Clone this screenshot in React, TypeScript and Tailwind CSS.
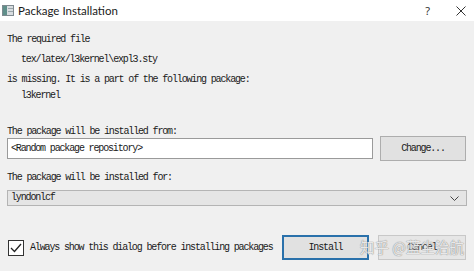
const mono = "font-['Liberation_Mono',monospace] text-[10px] leading-[12px] tracking-[-1.15px] text-[#1a1a1a]";

function TitleIcon() {
  return (
    <svg width="12" height="11" viewBox="0 0 12 11">
      <rect x="0.5" y="0.5" width="11" height="10" fill="#d8dde0" stroke="#7f8a90" />
      <rect x="1" y="1" width="4" height="9" fill="#5f8f8a" />
      <rect x="6" y="3" width="5" height="1" fill="#9aa6ab" />
      <rect x="6" y="6" width="5" height="1" fill="#9aa6ab" />
    </svg>
  );
}

export default function App() {
  return (
    <div className="w-[474px] h-[271px] flex flex-col bg-[#f0f0f0] overflow-hidden">
      {/* Title bar */}
      <div className="h-[21px] bg-white flex items-center pl-[2px] pr-[8px]">
        <TitleIcon />
        <span className="ml-[4px] font-['Lato',sans-serif] text-[11.5px] text-[#1a1a1a] leading-none">
          Package Installation
        </span>
        <span className="ml-auto font-['Noto_Sans',sans-serif] text-[11px] text-[#333] leading-none">?</span>
        <svg className="ml-[26px]" width="10" height="10" viewBox="0 0 10 10">
          <path d="M0.5 0.5 L9.5 9.5 M9.5 0.5 L0.5 9.5" stroke="#333" strokeWidth="1" />
        </svg>
      </div>

      {/* Body */}
      <div className="flex-1 flex flex-col px-[7px] pt-[13px]">
        <div className={mono}>The required file</div>
        <div className={`${mono} mt-[8px] pl-[14px]`}>tex/latex/l3kernel\expl3.sty</div>
        <div className={`${mono} mt-[8px]`}>is missing. It is a part of the following package:</div>
        <div className={`${mono} mt-[4px] pl-[14px]`}>l3kernel</div>

        <div className={`${mono} mt-[24px]`}>The package will be installed from:</div>
        <div className="mt-[-2px] flex items-center gap-[7px]">
          <div className="w-[366px] h-[21px] bg-white border border-[#9a9a9a] flex items-center px-[3px]">
            <span className={mono}>&lt;Random package repository&gt;</span>
          </div>
          <button className="w-[86px] h-[25px] bg-[#e1e1e1] border border-[#adadad] flex items-center justify-center">
            <span className={mono}>Change...</span>
          </button>
        </div>

        <div className={`${mono} mt-[11px]`}>The package will be installed for:</div>
        <div className="mt-[6px] h-[16px] w-[460px] bg-[#e5e5e5] border border-[#b4b4b4] flex items-center px-[3px]">
          <span className={mono}>lyndonlcf</span>
          <svg className="ml-auto mr-[4px]" width="9" height="5" viewBox="0 0 9 5">
            <path d="M0.5 0.5 L4.5 4.5 L8.5 0.5" stroke="#444" fill="none" strokeWidth="1" />
          </svg>
        </div>

        <div className="mt-[29px] flex items-center">
          <div className="w-[16px] h-[16px] bg-white border border-[#333] flex items-center justify-center ml-[1px]">
            <svg width="12" height="10" viewBox="0 0 12 10">
              <path d="M1 5 L4.5 8.5 L11 1" stroke="#222" fill="none" strokeWidth="1.3" />
            </svg>
          </div>
          <span className={`${mono} ml-[6px]`}>Always show this dialog before installing packages</span>
          <button className="ml-auto w-[87px] h-[25px] bg-[#e1e1e1] border-2 border-[#2a71ab] flex items-center justify-center">
            <span className={mono}>Install</span>
          </button>
          <div className="relative ml-[9px] mr-[1px]">
            <button className="w-[88px] h-[25px] bg-[#e6e6e6] border border-[#c8c8c8] flex items-center justify-center">
              <span className={`${mono} text-[#333]`}>Cancel</span>
            </button>
            <span className="absolute left-[-18px] top-[3px] whitespace-nowrap font-['Noto_Sans_CJK_SC',sans-serif] text-[14.5px] leading-[18px] text-white/80 [text-shadow:0_0_1px_#8a8a8a,0_0_1px_#8a8a8a]">
              知乎 @蓝尘治航
            </span>
          </div>
        </div>
      </div>
    </div>
  );
}
